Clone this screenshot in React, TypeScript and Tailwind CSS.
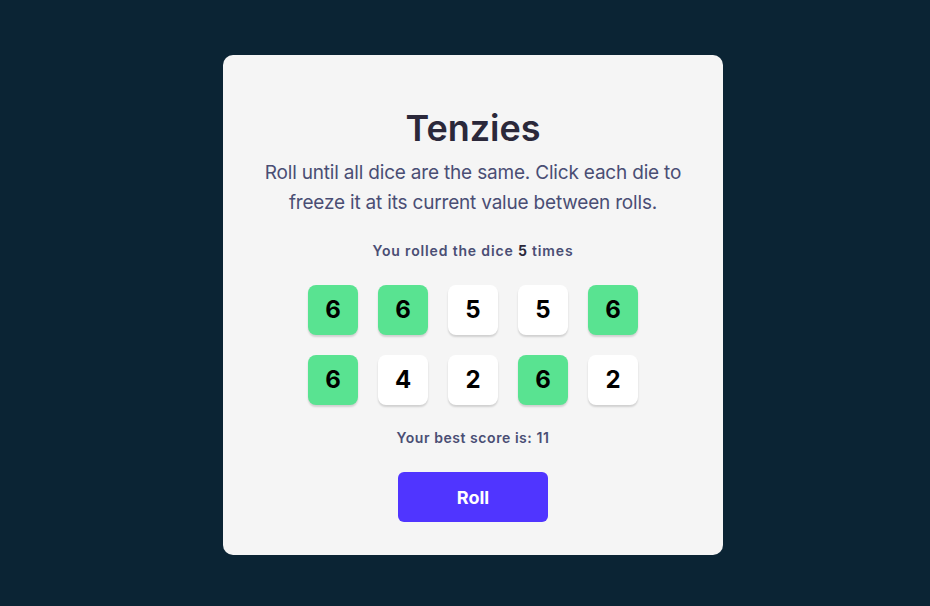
const dice = [
  { value: 6, held: true },
  { value: 6, held: true },
  { value: 5, held: false },
  { value: 5, held: false },
  { value: 6, held: true },
  { value: 6, held: true },
  { value: 4, held: false },
  { value: 2, held: false },
  { value: 6, held: true },
  { value: 2, held: false },
];

function Die({ value, held }: { value: number; held: boolean }) {
  return (
    <button
      className={
        'w-[50px] h-[50px] rounded-[8px] flex items-center justify-center text-[24px] font-bold text-black shadow-[0_2px_2px_rgba(0,0,0,0.15)] ' +
        (held ? 'bg-[#59E391]' : 'bg-white')
      }
    >
      {value}
    </button>
  );
}

export default function App() {
  return (
    <div
      className="min-h-[606px] w-full bg-[#0B2434] flex items-start justify-center pt-[55px] pl-[16px]"
      style={{ fontFamily: 'Inter, "Noto Sans", sans-serif' }}
    >
      <main className="w-[500px] h-[500px] bg-[#F5F5F5] rounded-[10px] flex flex-col items-center pt-[51px]">
        <h1 className="text-[36px] leading-[44px] font-semibold text-[#2B283A]">Tenzies</h1>
        <p className="mt-[8px] w-[440px] text-center text-[19px] leading-[30px] text-[#4A4E74] tracking-[-0.01em]">
          Roll until all dice are the same. Click each die to freeze it at its current value between rolls.
        </p>
        <p className="mt-[23px] text-[14px] leading-[20px] font-semibold text-[#4A4E74] tracking-[0.06em]">
          You rolled the dice <span className="text-[#2B283A] font-bold">5</span> times
        </p>
        <div className="mt-[24px] grid grid-cols-5 gap-[20px]">
          {dice.map((d, i) => (
            <Die key={i} value={d.value} held={d.held} />
          ))}
        </div>
        <p className="mt-[23px] text-[14px] leading-[20px] font-semibold text-[#4A4E74] tracking-[0.04em]">
          Your best score is: 11
        </p>
        <button className="mt-[24px] w-[150px] h-[50px] rounded-[6px] bg-[#5035FF] text-white text-[18px] font-bold">
          Roll
        </button>
      </main>
    </div>
  );
}
